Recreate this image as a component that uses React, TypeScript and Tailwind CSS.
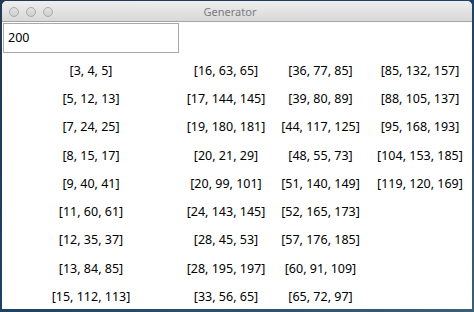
import * as React from 'react';

const columns: string[][] = [
    ["[3, 4, 5]", "[5, 12, 13]", "[7, 24, 25]", "[8, 15, 17]", "[9, 40, 41]", "[11, 60, 61]", "[12, 35, 37]", "[13, 84, 85]", "[15, 112, 113]"],
    ["[16, 63, 65]", "[17, 144, 145]", "[19, 180, 181]", "[20, 21, 29]", "[20, 99, 101]", "[24, 143, 145]", "[28, 45, 53]", "[28, 195, 197]", "[33, 56, 65]"],
    ["[36, 77, 85]", "[39, 80, 89]", "[44, 117, 125]", "[48, 55, 73]", "[51, 140, 149]", "[52, 165, 173]", "[57, 176, 185]", "[60, 91, 109]", "[65, 72, 97]"],
    ["[85, 132, 157]", "[88, 105, 137]", "[95, 168, 193]", "[104, 153, 185]", "[119, 120, 169]"],
];

const TrafficLight = () => (
    <span className="h-[10px] w-[10px] rounded-full border border-[#a9a9a9] bg-gradient-to-b from-[#e2e2e2] to-[#cfcfcf]" />
);

export default function App() {
    // row-major order so the grid fills left to right
    const cells: string[] = [];
    for (let r = 0; r < 9; r++) {
        for (let c = 0; c < 4; c++) {
            cells.push(columns[c][r] ?? "");
        }
    }

    return (
        <div className="w-[474px] h-[312px] bg-gradient-to-br from-[#22384f] via-[#1d4266] to-[#3b5f78] pt-[1px] px-[2px] font-['Noto_Sans',sans-serif]">
            <div className="w-[470px] h-[308px] bg-white rounded-t-[5px] overflow-hidden flex flex-col">
                {/* Title bar */}
                <div className="relative h-[21px] shrink-0 flex items-center justify-center bg-gradient-to-b from-[#eeeeee] to-[#d8d8d8] border-b border-[#a4a4a4]">
                    <div className="absolute left-[7px] top-[6px] flex gap-[7px]">
                        <TrafficLight />
                        <TrafficLight />
                        <TrafficLight />
                    </div>
                    <span className="text-[11px] text-[#7b7b7b] mr-[14px] leading-none">Generator</span>
                </div>

                {/* Content */}
                <div className="pl-[1px] pt-[1px]">
                    <div className="w-[176px] h-[30px] border border-[#a9a9a9] bg-white flex items-center pl-[4px] text-[12.5px] text-black">
                        200
                    </div>
                    <div className="mt-[4px] grid grid-cols-[176px_94px_95px_104px] auto-rows-[28.25px] text-[12.5px] text-black">
                        {cells.map((t, i) => (
                            <div key={i} className="flex items-center justify-center whitespace-nowrap">
                                {t}
                            </div>
                        ))}
                    </div>
                </div>
            </div>
        </div>
    );
}
